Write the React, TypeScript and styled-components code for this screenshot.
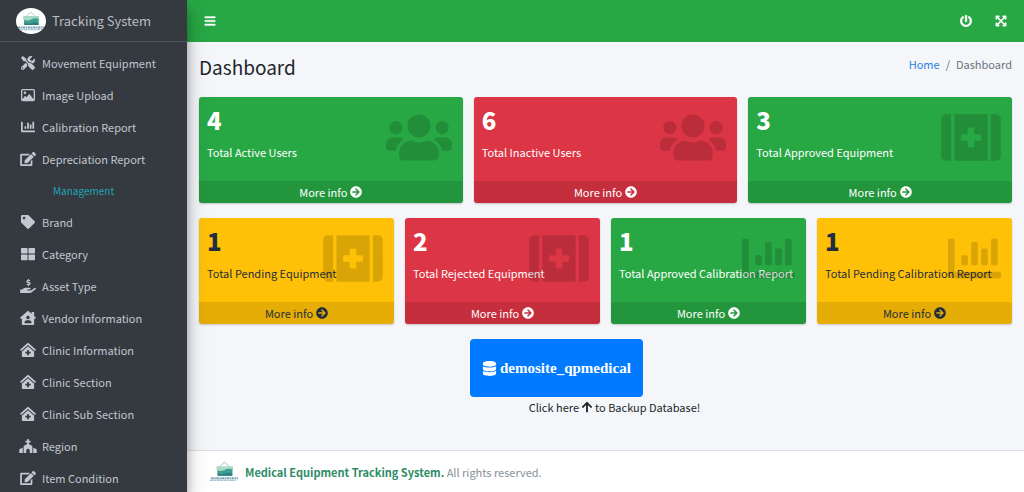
import React from "react";
import styled, { createGlobalStyle } from "styled-components";
import type { IconType } from "react-icons";
import {
  FaArrowCircleRight,
  FaArrowUp,
  FaBars,
  FaChartBar,
  FaChurch,
  FaClinicMedical,
  FaDatabase,
  FaEdit,
  FaExpandArrowsAlt,
  FaFirstAid,
  FaHandHoldingUsd,
  FaHouseUser,
  FaPowerOff,
  FaTag,
  FaThLarge,
  FaTools,
  FaUsers,
} from "react-icons/fa";
import { FaRegImage } from "react-icons/fa6";

const GlobalStyle = createGlobalStyle`
  *, *::before, *::after { box-sizing: border-box; }
  body {
    margin: 0;
    background: #f4f6f9;
    color: #212529;
    font-family: "Noto Sans CJK SC", "Noto Sans", sans-serif;
    font-size: 11px;
    line-height: 16px;
  }
  a { color: inherit; text-decoration: none; }
  h1, h2, p, ul, ol { margin: 0; padding: 0; }
  ul, ol { list-style: none; }
`;

const Page = styled.div`
  display: grid;
  grid-template-columns: 187px minmax(0, 1fr);
  min-height: 100vh;
`;

const Sidebar = styled.aside`
  position: sticky;
  top: 0;
  z-index: 2;
  height: 100vh;
  overflow-y: auto;
  scrollbar-width: none;
  background: #343a40;
  color: #c2c7d0;
  box-shadow: 0 10px 20px rgba(0, 0, 0, 0.25), 0 8px 8px rgba(0, 0, 0, 0.22);
`;

const Brand = styled.a`
  display: flex;
  align-items: center;
  gap: 6px;
  height: 42px;
  padding-left: 16px;
  border-bottom: 1px solid #4b545c;
  color: #b9bcc0;
  font-size: 13px;
`;

const BrandBadge = styled.span`
  display: flex;
  align-items: center;
  justify-content: center;
  width: 30px;
  height: 26px;
  border-radius: 50%;
  background: #fff;
  overflow: hidden;
`;

const NavList = styled.ul`
  padding-top: 5px;
`;

const NavLink = styled.a`
  display: flex;
  align-items: center;
  gap: 5px;
  height: 32px;
  padding-left: 19px;
`;

const NavIcon = styled.span`
  display: flex;
  justify-content: center;
  width: 18px;

  svg {
    width: 18px;
    height: 14px;
  }
`;

const NavHeader = styled.li`
  height: 31px;
  padding-left: 53px;
  color: #20a5b3;
  font-size: 10px;
  line-height: 32px;
`;

const Main = styled.div`
  display: flex;
  flex-direction: column;
  min-width: 0;
`;

const Topbar = styled.header`
  display: flex;
  align-items: center;
  justify-content: space-between;
  height: 42px;
  padding: 0 17px;
  background: #28a745;
`;

const TopbarGroup = styled.div`
  display: flex;
  gap: 23px;
`;

const IconButton = styled.button`
  display: flex;
  padding: 0;
  border: 0;
  background: none;
  color: #fff;
  font-size: 12px;

  svg {
    stroke: currentColor;
    stroke-width: 16px;
  }
`;

const Content = styled.main`
  flex: 1;
  padding: 0 12px;
`;

const PageHeader = styled.div`
  display: flex;
  align-items: flex-start;
  justify-content: space-between;
  height: 55px;
  padding-top: 11px;
`;

const PageTitle = styled.h1`
  font-size: 19px;
  font-weight: 400;
  line-height: 28px;
`;

const Breadcrumb = styled.ol`
  display: flex;
  gap: 6px;
  padding-top: 3px;
  color: #6c757d;

  a { color: #2a82dd; }
`;

const CardRow = styled.div<{ $columns: number }>`
  display: grid;
  grid-template-columns: repeat(${(p) => p.$columns}, minmax(0, 1fr));
  gap: 11px;
  margin-bottom: 15px;
`;

const tones = {
  green: { background: "#28a745", text: "#fff" },
  red: { background: "#dc3545", text: "#fff" },
  yellow: { background: "#ffc107", text: "#1f2d3d" },
};

type Tone = keyof typeof tones;

const Card = styled.section<{ $tone: Tone }>`
  position: relative;
  border-radius: 3px;
  overflow: hidden;
  background: ${(p) => tones[p.$tone].background};
  color: ${(p) => tones[p.$tone].text};
  box-shadow: 0 1px 2px rgba(0, 0, 0, 0.2);
`;

const CardBody = styled.div`
  height: 84px;
  padding: 7px 8px;
`;

const CardValue = styled.h2`
  font-size: 24px;
  font-weight: 900;
  line-height: 32px;
`;

const CardLabel = styled.p`
  padding-top: 8px;
  white-space: nowrap;
`;

const CardIcon = styled.span<{ $width: number }>`
  position: absolute;
  top: 14px;
  right: 11px;
  color: rgba(0, 0, 0, 0.15);

  svg {
    display: block;
    width: ${(p) => p.$width}px;
    height: 53px;
  }
`;

const CardLink = styled.a`
  display: flex;
  align-items: center;
  justify-content: center;
  gap: 3px;
  height: 22px;
  background: rgba(0, 0, 0, 0.1);

  svg { font-size: 12px; }
`;

const BackupRow = styled.div`
  display: grid;
  grid-template-columns: repeat(3, minmax(0, 1fr));
`;

const BackupCell = styled.div`
  grid-column: 2;
`;

const BackupButton = styled.button`
  display: flex;
  align-items: center;
  gap: 3px;
  height: 58px;
  padding: 0 12px;
  border: 0;
  border-radius: 4px;
  background: #007bff;
  color: #fff;
  font-family: "Liberation Serif", serif;
  font-size: 15px;
  font-weight: 700;
`;

const BackupHint = styled.p`
  display: flex;
  align-items: center;
  justify-content: center;
  gap: 2px;
  padding: 2px 0 0 18px;

  svg { font-size: 12px; }
`;

const Footer = styled.footer`
  display: flex;
  align-items: center;
  gap: 5px;
  height: 42px;
  padding: 0 22px;
  border-top: 1px solid #dee2e6;
  background: #fff;
  color: #869099;

  strong { color: #2e8b66; }
`;

function Logo({ width, height }: { width: number; height: number }) {
  return (
    <svg width={width} height={height} viewBox="0 0 60 44" aria-hidden="true">
      <path d="M21 12 30 4l9 8" fill="none" stroke="#b5d6d1" strokeWidth="2" />
      <path d="M15 13h31l-1 17H17z" fill="#3f9f93" />
      <path d="M15 13h31v5q-8-3-16 1t-15 0z" fill="#a9dcc4" />
      <path d="M16 25q8 4 15 1t14 0v4H17z" fill="#2b7f7f" />
      <path d="M4 35h52" stroke="#7fa6b8" strokeWidth="4" strokeDasharray="5 1 3 1" />
      <path d="M2 39h50" stroke="#a9c2d0" strokeWidth="3" strokeDasharray="7 1 4 1" />
    </svg>
  );
}

type NavEntry = { label: string; icon: IconType };

const reportLinks: NavEntry[] = [
  { label: "Movement Equipment", icon: FaTools },
  { label: "Image Upload", icon: FaRegImage },
  { label: "Calibration Report", icon: FaChartBar },
  { label: "Depreciation Report", icon: FaEdit },
];

const managementLinks: NavEntry[] = [
  { label: "Brand", icon: FaTag },
  { label: "Category", icon: FaThLarge },
  { label: "Asset Type", icon: FaHandHoldingUsd },
  { label: "Vendor Information", icon: FaHouseUser },
  { label: "Clinic Information", icon: FaClinicMedical },
  { label: "Clinic Section", icon: FaClinicMedical },
  { label: "Clinic Sub Section", icon: FaClinicMedical },
  { label: "Region", icon: FaChurch },
  { label: "Item Condition", icon: FaEdit },
];

type Artwork = { icon: IconType; width: number };

const people: Artwork = { icon: FaUsers, width: 66 };
const kit: Artwork = { icon: FaFirstAid, width: 60 };
const chart: Artwork = { icon: FaChartBar, width: 53 };

type Stat = { value: number; label: string; tone: Tone; art: Artwork };

const primaryStats: Stat[] = [
  { value: 4, label: "Total Active Users", tone: "green", art: people },
  { value: 6, label: "Total Inactive Users", tone: "red", art: people },
  { value: 3, label: "Total Approved Equipment", tone: "green", art: kit },
];

const secondaryStats: Stat[] = [
  { value: 1, label: "Total Pending Equipment", tone: "yellow", art: kit },
  { value: 2, label: "Total Rejected Equipment", tone: "red", art: kit },
  { value: 1, label: "Total Approved Calibration Report", tone: "green", art: chart },
  { value: 1, label: "Total Pending Calibration Report", tone: "yellow", art: chart },
];

function NavItem({ label, icon: Icon }: NavEntry) {
  return (
    <li>
      <NavLink href="#">
        <NavIcon><Icon /></NavIcon>
        {label}
      </NavLink>
    </li>
  );
}

function StatCard({ value, label, tone, art }: Stat) {
  const Icon = art.icon;
  return (
    <Card $tone={tone}>
      <CardBody>
        <CardValue>{value}</CardValue>
        <CardLabel>{label}</CardLabel>
      </CardBody>
      <CardIcon $width={art.width}><Icon /></CardIcon>
      <CardLink href="#">
        More info <FaArrowCircleRight />
      </CardLink>
    </Card>
  );
}

export default function App() {
  return (
    <>
      <GlobalStyle />
      <Page>
        <Sidebar>
          <Brand href="#">
            <BrandBadge><Logo width={30} height={22} /></BrandBadge>
            Tracking System
          </Brand>
          <nav>
            <NavList>
              {reportLinks.map((entry) => <NavItem key={entry.label} {...entry} />)}
              <NavHeader>Management</NavHeader>
              {managementLinks.map((entry) => <NavItem key={entry.label} {...entry} />)}
            </NavList>
          </nav>
        </Sidebar>
        <Main>
          <Topbar>
            <IconButton aria-label="Toggle menu"><FaBars /></IconButton>
            <TopbarGroup>
              <IconButton aria-label="Log out"><FaPowerOff /></IconButton>
              <IconButton aria-label="Full screen"><FaExpandArrowsAlt /></IconButton>
            </TopbarGroup>
          </Topbar>
          <Content>
            <PageHeader>
              <PageTitle>Dashboard</PageTitle>
              <Breadcrumb>
                <li><a href="#">Home</a></li>
                <li aria-hidden="true">/</li>
                <li>Dashboard</li>
              </Breadcrumb>
            </PageHeader>
            <CardRow $columns={3}>
              {primaryStats.map((stat) => <StatCard key={stat.label} {...stat} />)}
            </CardRow>
            <CardRow $columns={4}>
              {secondaryStats.map((stat) => <StatCard key={stat.label} {...stat} />)}
            </CardRow>
            <BackupRow>
              <BackupCell>
                <BackupButton><FaDatabase /> demosite_qpmedical</BackupButton>
                <BackupHint>
                  Click here <FaArrowUp /> to Backup Database!
                </BackupHint>
              </BackupCell>
            </BackupRow>
          </Content>
          <Footer>
            <Logo width={31} height={23} />
            <p><strong>Medical Equipment Tracking System.</strong> All rights reserved.</p>
          </Footer>
        </Main>
      </Page>
    </>
  );
}
